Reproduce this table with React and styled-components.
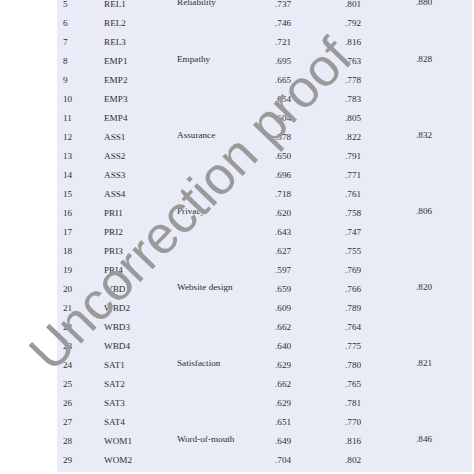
import React from "react";
import styled, { createGlobalStyle } from "styled-components";

const Global = createGlobalStyle`
  html, body { margin: 0; padding: 0; background: #ffffff; }
`;

const Page = styled.div`
  position: relative;
  width: 474px;
  height: 474px;
  overflow: hidden;
  background: #ffffff;
`;

const Panel = styled.div`
  margin-left: 57px;
  width: 415px;
  height: 472px;
  background: #e9ecf6;
  overflow: hidden;
  padding-left: 6px;
  box-sizing: border-box;
`;

const Table = styled.div`
  margin-top: -5.5px;
  display: flex;
  flex-direction: column;
`;

const Row = styled.div`
  display: grid;
  grid-template-columns: 41px 73px 98px 70px 71px 1fr;
  height: 19px;
  align-items: center;
  font-family: "Liberation Serif", "Times New Roman", serif;
  font-size: 9.2px;
  color: #2f2f2f;
`;

const Cell = styled.div`
  white-space: nowrap;
  padding-bottom: ${(p) => (p.$raised ? "4px" : "0")};
`;

const Watermark = styled.div`
  position: absolute;
  left: 190px;
  top: 204px;
  transform: translate(-50%, -50%) rotate(-46deg);
  font-family: "Liberation Sans", Arial, sans-serif;
  font-size: 53px;
  color: #9a9a9a;
  white-space: nowrap;
  pointer-events: none;
`;

const rows = [
  [5, "REL1", "Reliability", ".737", ".801", ".880"],
  [6, "REL2", "", ".746", ".792", ""],
  [7, "REL3", "", ".721", ".816", ""],
  [8, "EMP1", "Empathy", ".695", ".763", ".828"],
  [9, "EMP2", "", ".665", ".778", ""],
  [10, "EMP3", "", ".654", ".783", ""],
  [11, "EMP4", "", ".604", ".805", ""],
  [12, "ASS1", "Assurance", ".578", ".822", ".832"],
  [13, "ASS2", "", ".650", ".791", ""],
  [14, "ASS3", "", ".696", ".771", ""],
  [15, "ASS4", "", ".718", ".761", ""],
  [16, "PRI1", "Privacy", ".620", ".758", ".806"],
  [17, "PRI2", "", ".643", ".747", ""],
  [18, "PRI3", "", ".627", ".755", ""],
  [19, "PRI4", "", ".597", ".769", ""],
  [20, "WBD1", "Website design", ".659", ".766", ".820"],
  [21, "WBD2", "", ".609", ".789", ""],
  [22, "WBD3", "", ".662", ".764", ""],
  [23, "WBD4", "", ".640", ".775", ""],
  [24, "SAT1", "Satisfaction", ".629", ".780", ".821"],
  [25, "SAT2", "", ".662", ".765", ""],
  [26, "SAT3", "", ".629", ".781", ""],
  [27, "SAT4", "", ".651", ".770", ""],
  [28, "WOM1", "Word-of-mouth", ".649", ".816", ".846"],
  [29, "WOM2", "", ".704", ".802", ""],
];

export default function App() {
  return (
    <Page>
      <Global />
      <Panel>
        <Table>
          {rows.map(([n, code, construct, l1, l2, alpha]) => (
            <Row key={n}>
              <Cell>{n}</Cell>
              <Cell>{code}</Cell>
              <Cell $raised>{construct}</Cell>
              <Cell>{l1}</Cell>
              <Cell>{l2}</Cell>
              <Cell $raised>{alpha}</Cell>
            </Row>
          ))}
        </Table>
      </Panel>
      <Watermark>Uncorrection proof</Watermark>
    </Page>
  );
}
